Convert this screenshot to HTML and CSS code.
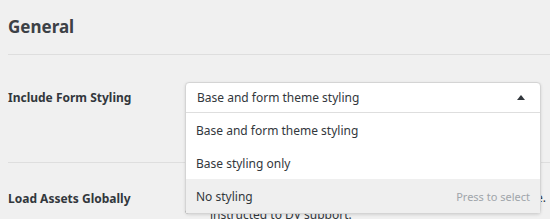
FILE: index.html
```html
<!DOCTYPE html>
<html lang="en">
<head>
    <meta charset="UTF-8">
    <title>General Settings</title>
    <link rel="stylesheet" href="styles.css">
</head>
<body>
    <div class="wrap">
        <h2 class="section-title">General</h2>

        <div class="setting-row">
            <div class="setting-label">Include Form Styling</div>
            <div class="setting-field">
                <div class="chooser">
                    <div class="chooser-current">
                        <span>Base and form theme styling</span>
                        <span class="chooser-arrow"></span>
                    </div>
                    <ul class="chooser-list">
                        <li>Base and form theme styling</li>
                        <li>Base styling only</li>
                        <li class="highlighted">No styling <span class="hint">Press to select</span></li>
                    </ul>
                </div>
            </div>
        </div>

        <div class="setting-row">
            <div class="setting-label">Load Assets Globally</div>
            <div class="setting-field">
                <label class="check">
                    <input type="checkbox">
                    <span class="check-text">
                        <span class="check-line">Load on every page if forms appear outside a page.</span>
                        <span class="check-line">instructed to DV support.</span>
                    </span>
                </label>
            </div>
        </div>
    </div>
</body>
</html>
```

FILE: styles.css
```css
* {
    margin: 0;
    padding: 0;
    box-sizing: border-box;
}

body {
    font-family: "Noto Sans", "Open Sans", sans-serif;
    background: #f0f0f0;
    color: #32373c;
    overflow: hidden;
}

.wrap {
    padding: 0 0 0 8px;
}

.section-title {
    font-size: 17px;
    font-weight: 700;
    color: #3c4146;
    height: 55px;
    line-height: 54px;
    border-bottom: 1px solid #dedede;
}

.setting-row {
    display: flex;
    border-bottom: 1px solid #dedede;
    height: 108px;
}

.setting-row + .setting-row {
    border-bottom: none;
}

.setting-label {
    width: 177px;
    font-size: 12px;
    font-weight: 700;
    padding-top: 34px;
    color: #32373c;
}

.setting-row + .setting-row .setting-label {
    padding-top: 27px;
}

.setting-field {
    flex: 1;
    position: relative;
    padding-top: 27px;
    font-size: 12px;
}

.setting-row + .setting-row .setting-field {
    padding-top: 26px;
}

.chooser {
    position: absolute;
    top: 27px;
    left: 0;
    width: 356px;
    background: #fff;
    border: 1px solid #d4d4d4;
    border-radius: 4px;
    box-shadow: 0 1px 3px rgba(0, 0, 0, 0.12);
    z-index: 2;
    font-size: 12px;
}

.chooser-current {
    height: 30px;
    display: flex;
    align-items: center;
    justify-content: space-between;
    padding: 0 9px 0 11px;
    border-bottom: 1px solid #dedede;
    color: #32373c;
}

.chooser-arrow {
    width: 0;
    height: 0;
    border-left: 4px solid transparent;
    border-right: 4px solid transparent;
    border-bottom: 5px solid #32373c;
    margin-right: 6px;
}

.chooser-list {
    list-style: none;
}

.chooser-list li {
    height: 33px;
    display: flex;
    align-items: center;
    justify-content: space-between;
    padding: 1px 10px 0 10px;
}

.chooser-list li.highlighted {
    background: #efefef;
    height: 34px;
}

.hint {
    color: #a0a5aa;
    font-size: 11px;
}

.check {
    display: flex;
    gap: 12px;
    color: #32373c;
    line-height: 17px;
}

.check input {
    margin-top: 2px;
}

.check-text {
    display: block;
    width: 336px;
}

.check-line {
    display: block;
    white-space: nowrap;
}

.check-line:first-child {
    text-align: justify;
    text-align-last: justify;
    white-space: normal;
}
```
